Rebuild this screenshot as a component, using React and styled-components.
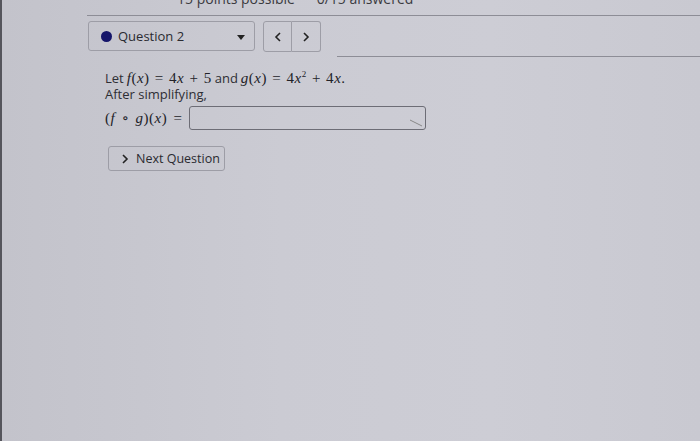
import React from "react";
import styled, { createGlobalStyle } from "styled-components";

const Global = createGlobalStyle`
  html, body { margin: 0; padding: 0; }
  body {
    background: #c8c8d0;
    font-family: "Open Sans", "Liberation Sans", sans-serif;
    color: #2e2e34;
    width: 700px;
    height: 441px;
    overflow: hidden;
  }
`;

const Page = styled.div`
  position: relative;
  width: 700px;
  height: 441px;
  border-left: 2px solid #55555c;
  box-sizing: border-box;
  background: linear-gradient(90deg, #c3c3cb 0%, #cbcbd3 40%, #cdcdd5 70%, #c9c9d1 100%);
`;

const Header = styled.div`
  margin-left: 85px;
  height: 15px;
  border-bottom: 1px solid #8d8d96;
  position: relative;
  overflow: hidden;
`;

const HeaderText = styled.div`
  position: absolute;
  top: -11px;
  left: 90px;
  font-size: 14px;
  color: #3a3a40;
  white-space: pre;
`;

const ToolbarRow = styled.div`
  display: flex;
  align-items: flex-start;
  padding: 5px 0 0 86px;
  height: 36px;
  position: relative;
`;

const RightRule = styled.div`
  position: absolute;
  left: 335px;
  right: 0;
  top: 40px;
  border-top: 1px solid #8d8d96;
`;

const Select = styled.div`
  width: 167px;
  height: 30px;
  box-sizing: border-box;
  border: 1px solid #9d9da6;
  border-radius: 3px;
  display: flex;
  align-items: center;
  padding: 0 9px 0 12px;
  font-size: 13px;
  color: #2a2a30;
`;

const Dot = styled.span`
  width: 11px;
  height: 11px;
  border-radius: 50%;
  background: #15156a;
  margin-right: 6px;
`;

const Label = styled.span`
  flex: 1;
`;

const Caret = styled.span`
  width: 0;
  height: 0;
  border-left: 4px solid transparent;
  border-right: 4px solid transparent;
  border-top: 5px solid #222;
  margin-top: 2px;
`;

const NavGroup = styled.div`
  display: flex;
  margin-left: 8px;
`;

const NavButton = styled.div`
  width: 29px;
  height: 31px;
  box-sizing: border-box;
  border: 1px solid #9d9da6;
  border-radius: ${(p) => (p.$left ? "3px 0 0 3px" : "0 3px 3px 0")};
  border-left: ${(p) => (p.$left ? "1px solid #9d9da6" : "none")};
  display: flex;
  align-items: center;
  justify-content: center;
`;

const Content = styled.div`
  padding: 13px 0 0 103px;
  font-size: 13px;
  line-height: 16px;
  color: #2e2e34;
`;

const Math = styled.span`
  font-family: "Liberation Serif", "DejaVu Serif", serif;
  font-size: 15px;
  letter-spacing: 0.5px;
  word-spacing: ${(p) => (p.$wide ? "2px" : "1px")};
  margin: ${(p) => (p.$wide ? "0" : "0 3px")};
  color: #222228;
`;

const Var = styled.i`
  font-family: "Liberation Serif", "DejaVu Serif", serif;
`;

const Sup = styled.sup`
  font-size: 9px;
  line-height: 0;
  vertical-align: 0;
  position: relative;
  top: -6px;
`;

const Line = styled.div`
  height: 16px;
  white-space: nowrap;
`;

const AnswerRow = styled.div`
  display: flex;
  align-items: center;
  margin-top: 4px;
  height: 24px;
`;

const Input = styled.div`
  width: 237px;
  height: 24px;
  margin-left: 7px;
  box-sizing: border-box;
  border: 1px solid #6d6d76;
  border-radius: 3px;
  position: relative;
`;

const Grip = styled.svg`
  position: absolute;
  right: 2px;
  bottom: 2px;
`;

const NextButton = styled.div`
  margin: 16px 0 0 106px;
  width: 117px;
  height: 25px;
  box-sizing: border-box;
  border: 1px solid #9d9da6;
  border-radius: 3px;
  display: flex;
  align-items: center;
  padding-left: 12px;
  font-size: 12.5px;
  color: #2a2a30;
  gap: 7px;
`;

const Chevron = ({ dir }) => (
  <svg width="8" height="10" viewBox="0 0 8 10">
    <path
      d={dir === "left" ? "M6 1 L2 5 L6 9" : "M2 1 L6 5 L2 9"}
      fill="none"
      stroke="#222"
      strokeWidth="1.6"
    />
  </svg>
);

export default function App() {
  return (
    <>
      <Global />
      <Page>
        <Header>
          <HeaderText>{"15 points possible      0/15 answered"}</HeaderText>
        </Header>
        <ToolbarRow>
          <Select>
            <Dot />
            <Label>Question 2</Label>
            <Caret />
          </Select>
          <NavGroup>
            <NavButton $left>
              <Chevron dir="left" />
            </NavButton>
            <NavButton>
              <Chevron dir="right" />
            </NavButton>
          </NavGroup>
          <RightRule />
        </ToolbarRow>
        <Content>
          <Line>
            Let<Math><Var>f</Var>(<Var>x</Var>) = 4<Var>x</Var> + 5</Math>and
            <Math><Var>g</Var>(<Var>x</Var>) = 4<Var>x</Var><Sup>2</Sup> + 4<Var>x</Var>.</Math>
          </Line>
          <Line>After simplifying,</Line>
          <AnswerRow>
            <Math $wide>(<Var>f</Var> ∘ <Var>g</Var>)(<Var>x</Var>) =</Math>
            <Input>
              <Grip width="14" height="8" viewBox="0 0 14 8">
                <path d="M1 1 L13 7" stroke="#888" strokeWidth="1" />
              </Grip>
            </Input>
          </AnswerRow>
        </Content>
        <NextButton>
          <Chevron dir="right" />
          Next Question
        </NextButton>
      </Page>
    </>
  );
}
